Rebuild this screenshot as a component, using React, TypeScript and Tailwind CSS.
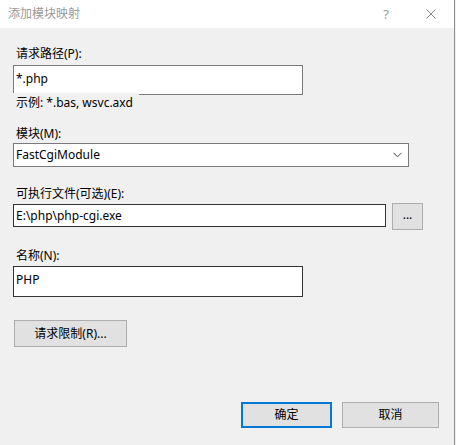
import React from 'react'

const font = { fontFamily: '"Noto Sans", "Noto Sans CJK SC", sans-serif' }

function Label({ children, className = '' }: { children: React.ReactNode; className?: string }) {
  return <div className={`pl-[3px] text-[12px] leading-[16px] text-black ${className}`}>{children}</div>
}

export default function App() {
  return (
    <div className="flex w-[456px] h-[445px] bg-white text-[12px]" style={font}>
      <div className="flex flex-col w-[454px] h-full bg-[#f0f0f0]">
        {/* title bar */}
        <div className="flex items-center h-[28px] bg-white pl-[8px] shrink-0">
          <span className="text-[12px] text-[#9a9a9a] leading-none">添加模块映射</span>
          <span className="ml-auto mr-[37px] text-[13px] text-[#9a9a9a] leading-none">?</span>
          <svg width="10" height="10" viewBox="0 0 10 10" className="mr-[18px]">
            <path d="M0.5 0.5 L9.5 9.5 M9.5 0.5 L0.5 9.5" stroke="#8a8a8a" strokeWidth="1" />
          </svg>
        </div>

        <div className="flex flex-col pl-[13px]">
          <Label className="mt-[18px]">请求路径(P):</Label>
          <div className="mt-[3px] w-[290px] h-[30px] bg-white border border-[#7a7a7a] px-[2px] pt-[5px] leading-[16px]">
            *.php
          </div>
          <div className="relative mt-[-2px] w-[126px] bg-[#f0f0f0] pl-[3px] pt-[2px] leading-[16px]">
            示例: *.bas, wsvc.axd
          </div>

          <Label className="mt-[15px]">模块(M):</Label>
          <div className="mt-[1px] flex items-center w-[396px] h-[24px] bg-white border border-[#7a7a7a] pl-[2px] pr-[6px]">
            <span>FastCgiModule</span>
            <svg width="9" height="6" viewBox="0 0 9 6" className="ml-auto">
              <path d="M0.5 0.8 L4.5 4.8 L8.5 0.8" fill="none" stroke="#444" strokeWidth="1" />
            </svg>
          </div>

          <Label className="mt-[19px]">可执行文件(可选)(E):</Label>
          <div className="mt-[1px] flex items-start gap-[6px]">
            <div className="mt-[1px] flex items-center w-[373px] h-[23px] bg-white border border-[#333] px-[2px]">
              E:\php\php-cgi.exe
            </div>
            <div className="flex items-center justify-center w-[31px] h-[27px] bg-[#e1e1e1] border border-[#adadad] leading-none pb-[3px]">
              ...
            </div>
          </div>

          <Label className="mt-[18px]">名称(N):</Label>
          <div className="mt-[2px] w-[290px] h-[31px] bg-white border border-[#333] px-[2px] pt-[5px] leading-[16px]">
            PHP
          </div>

          <div className="mt-[23px] ml-[1px] flex items-center justify-center w-[113px] h-[27px] bg-[#e1e1e1] border border-[#adadad]">
            请求限制(R)...
          </div>
        </div>

        <div className="mt-auto mb-[17px] flex justify-end gap-[10px] pr-[15px]">
          <div className="flex items-center justify-center w-[91px] h-[26px] bg-[#e1e1e1] border-2 border-[#0078d7]">
            确定
          </div>
          <div className="flex items-center justify-center w-[97px] h-[26px] bg-[#e1e1e1] border border-[#adadad]">
            取消
          </div>
        </div>
      </div>
      <div className="w-[1px] h-full bg-[#8f8f8f]" />
      <div className="w-[1px] h-full bg-[#f0f0f0]" />
    </div>
  )
}
